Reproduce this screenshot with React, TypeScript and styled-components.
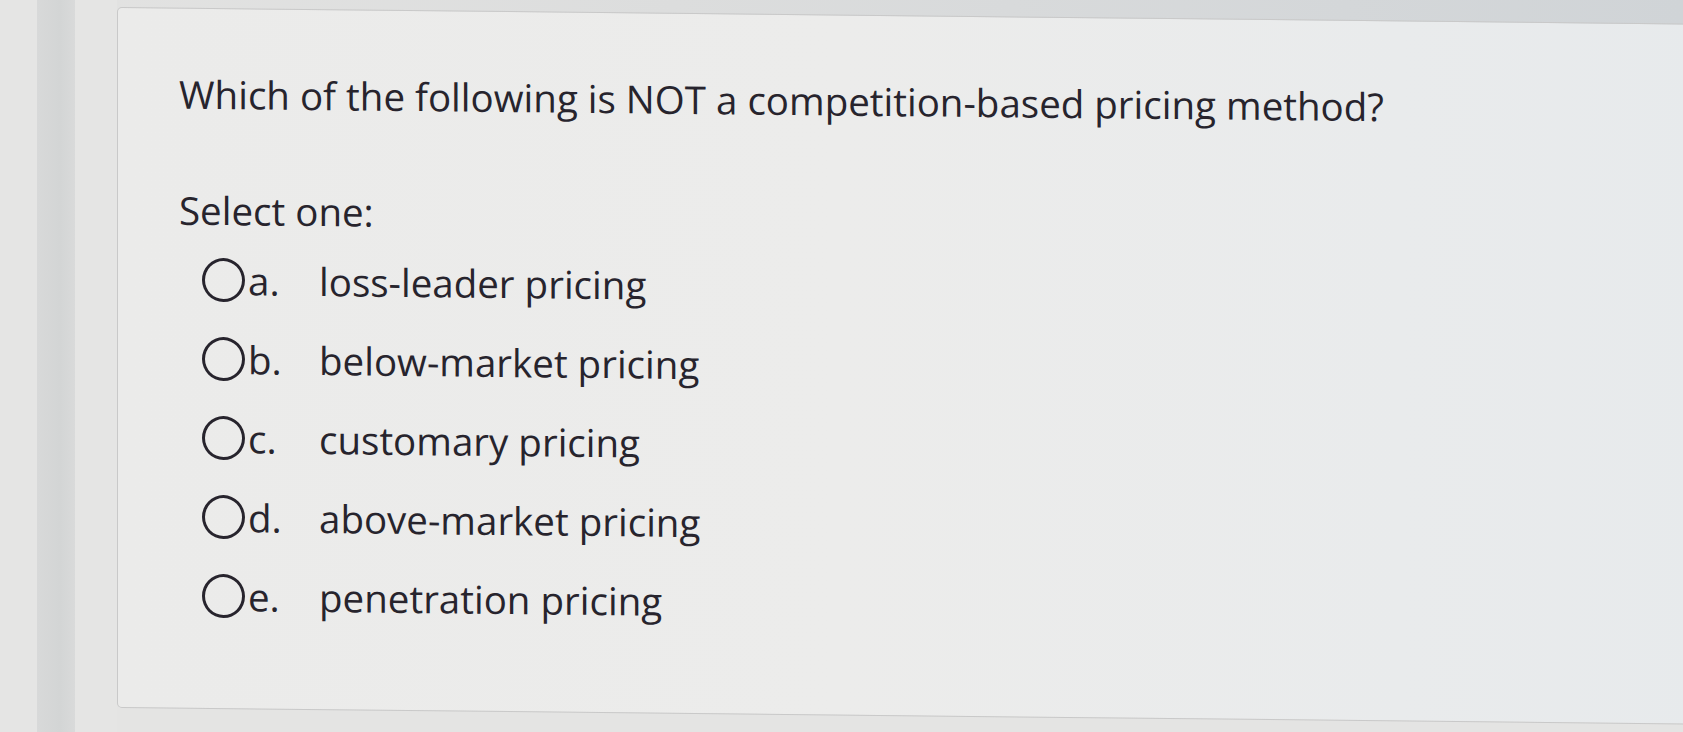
import styled, { createGlobalStyle } from 'styled-components';

const options = [
  { letter: 'a.', text: 'loss-leader pricing' },
  { letter: 'b.', text: 'below-market pricing' },
  { letter: 'c.', text: 'customary pricing' },
  { letter: 'd.', text: 'above-market pricing' },
  { letter: 'e.', text: 'penetration pricing' },
];

const GlobalStyle = createGlobalStyle`
  html, body {
    margin: 0;
    padding: 0;
    height: 100%;
  }

  body {
    font-family: 'Open Sans', 'Liberation Sans', sans-serif;
    background: #e4e4e3;
    overflow: hidden;
  }
`;

export default function App() {
  return (
    <>
      <GlobalStyle />
      <Page>
        <Rail>
          <RailStrip />
        </Rail>
        <Main>
          <Card>
            <Question>Which of the following is NOT a competition-based pricing method?</Question>
            <Prompt>Select one:</Prompt>
            <Answers>
              {options.map((option) => (
                <AnswerRow key={option.letter}>
                  <Radio />
                  <Letter>{option.letter}</Letter>
                  <AnswerText>{option.text}</AnswerText>
                </AnswerRow>
              ))}
            </Answers>
          </Card>
        </Main>
      </Page>
    </>
  );
}

const Page = styled.div`
  display: flex;
  width: 1683px;
  height: 732px;
  overflow: hidden;
  background: linear-gradient(90deg, #e3e3e2 0%, #dcdddd 40%, #d0d4d7 100%);
`;

const Rail = styled.div`
  flex: 0 0 117px;
  display: flex;
  padding-left: 37px;
  box-sizing: border-box;
  background: #e5e5e4;
`;

const RailStrip = styled.div`
  width: 38px;
  background: linear-gradient(90deg, #d8d9d9 0%, #d3d5d5 60%, #d9dada 100%);
`;

const Main = styled.div`
  flex: 1;
  padding-top: 7px;
  background: linear-gradient(180deg, transparent 0%, transparent 60%, #e4e4e3 60%);
`;

const Card = styled.div`
  width: calc(100% + 40px);
  height: 701px;
  box-sizing: border-box;
  padding: 63px 0 0 61px;
  border: 1px solid #c9c9c9;
  border-radius: 5px;
  background: linear-gradient(90deg, #ebebea 0%, #ececeb 45%, #e9ebec 80%, #e7eaec 100%);
  color: #27242d;
  transform: skewY(0.6deg);
  transform-origin: left top;
`;

const Question = styled.div`
  font-size: 38.5px;
  line-height: 44px;
  margin-bottom: 72px;
  white-space: nowrap;
`;

const Prompt = styled.div`
  font-size: 38.5px;
  line-height: 44px;
  margin-bottom: 26px;
`;

const Answers = styled.div`
  display: flex;
  flex-direction: column;
  gap: 35px;
  padding-left: 23px;
`;

const AnswerRow = styled.div`
  display: flex;
  align-items: center;
  height: 44px;
  font-size: 38.5px;
  line-height: 44px;
`;

const Radio = styled.span`
  width: 37px;
  height: 38px;
  border: 3px solid #27242d;
  border-radius: 50%;
  margin-right: 3px;
  flex: 0 0 auto;
`;

const Letter = styled.span`
  width: 71px;
  flex: 0 0 auto;
`;

const AnswerText = styled.span`
  white-space: nowrap;
`;
